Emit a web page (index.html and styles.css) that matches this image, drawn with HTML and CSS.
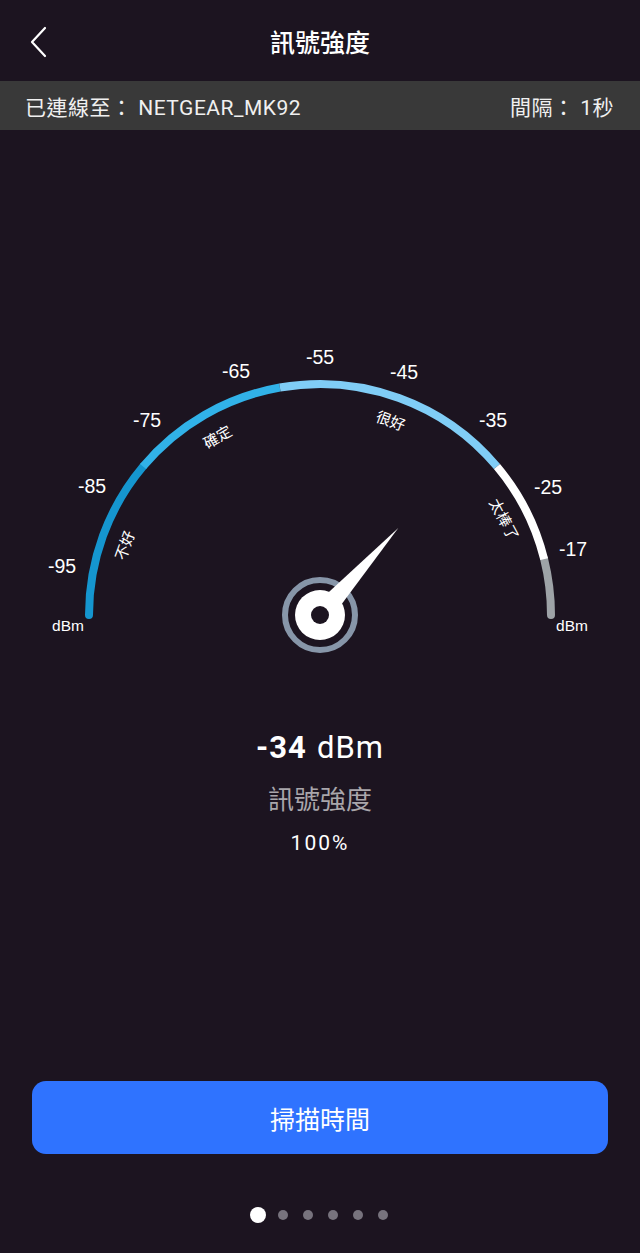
FILE: index.html
```html
<!DOCTYPE html>
<html lang="zh-Hant">
<head>
    <meta charset="UTF-8">
    <meta name="viewport" content="width=device-width, initial-scale=1.0">
    <title>訊號強度</title>
    <link rel="stylesheet" href="styles.css">
</head>
<body>
    <header class="topbar">
        <a href="#" class="back">
            <svg width="20" height="32" viewBox="0 0 20 32">
                <polyline points="15,2 2,16 15,30" fill="none" stroke="#fff" stroke-width="2.2" stroke-linecap="round" stroke-linejoin="round"/>
            </svg>
        </a>
        <h1>訊號強度</h1>
        <span></span>
    </header>

    <div class="status">
        <span>已連線至： NETGEAR_MK92</span>
        <span>間隔： 1秒</span>
    </div>

    <main class="meter">
        <svg class="gauge" width="640" height="340" viewBox="0 330 640 340">
            <!-- arc: center 320,615 r 231 -->
            <g fill="none" stroke-width="8">
                <path d="M89 615 A231 231 0 0 1 143.05 466.51" stroke="#1596cf" stroke-linecap="round"/>
                <path d="M143.05 466.51 A231 231 0 0 1 279.89 387.51" stroke="#31b2e8"/>
                <path d="M279.89 387.51 A231 231 0 0 1 496.95 466.51" stroke="#80cdf6"/>
                <path d="M544.14 559.12 A231 231 0 0 1 551 615" stroke="#9ea3a7" stroke-linecap="round"/>
                <path d="M496.95 466.51 A231 231 0 0 1 544.14 559.12" stroke="#ffffff"/>
            </g>

            <g class="ticks" text-anchor="middle">
                <text x="62" y="573">-95</text>
                <text x="92" y="493">-85</text>
                <text x="147" y="427">-75</text>
                <text x="236" y="378">-65</text>
                <text x="320" y="364">-55</text>
                <text x="404" y="379">-45</text>
                <text x="493" y="427">-35</text>
                <text x="548" y="494">-25</text>
                <text x="573" y="556">-17</text>
            </g>

            <g class="unit" text-anchor="middle">
                <text x="68" y="631">dBm</text>
                <text x="572" y="631">dBm</text>
            </g>

            <g class="zone" text-anchor="middle" dominant-baseline="central">
                <text transform="translate(124 545) rotate(-70)">不好</text>
                <text transform="translate(217 436) rotate(-30)">確定</text>
                <text transform="translate(391 420) rotate(20)">很好</text>
                <text transform="translate(505 519) rotate(62)">太棒了</text>
            </g>

            <circle cx="320" cy="615" r="35" fill="none" stroke="#8796a9" stroke-width="6"/>
            <polygon points="0,-11 117,0 0,11" fill="#fff" transform="translate(320 615) rotate(-48)"/>
            <circle cx="320" cy="615" r="25" fill="#fff"/>
            <circle cx="320" cy="615" r="9" fill="#1c1420"/>
        </svg>

        <div class="readout">
            <div class="value"><b>-34</b><span>dBm</span></div>
            <div class="label">訊號強度</div>
            <div class="percent">100%</div>
        </div>
    </main>

    <footer class="actions">
        <a href="#" class="button">掃描時間</a>
        <div class="dots">
            <span class="dot active"></span>
            <span class="dot"></span>
            <span class="dot"></span>
            <span class="dot"></span>
            <span class="dot"></span>
            <span class="dot"></span>
        </div>
    </footer>
</body>
</html>
```

FILE: styles.css
```css
/* Base */
body {
    margin: 0;
    min-height: 1253px;
    display: flex;
    flex-direction: column;
    background: #1c1420;
    color: #fff;
    font-family: Roboto, "Noto Sans CJK TC", sans-serif;
}

a {
    color: inherit;
    text-decoration: none;
}

/* Top bar */
.topbar {
    height: 81px;
    display: grid;
    grid-template-columns: 80px 1fr 80px;
    align-items: center;
}

.back {
    display: flex;
    padding-left: 30px;
    padding-top: 2px;
}

.topbar h1 {
    margin: 0;
    text-align: center;
    font-size: 25px;
    font-weight: 500;
}

/* Connection strip */
.status {
    height: 49px;
    display: flex;
    align-items: center;
    justify-content: space-between;
    padding: 0 26px 0 25px;
    background: #393939;
    font-size: 21px;
    letter-spacing: 0.5px;
    color: #f0f0f0;
}

/* Gauge */
.meter {
    display: flex;
    flex-direction: column;
    align-items: center;
}

.gauge {
    display: block;
    margin-top: 200px;
}

.ticks text {
    font-family: "Liberation Sans", Arial, sans-serif;
    font-size: 19.5px;
    fill: #fff;
}

.unit text {
    font-family: "Liberation Sans", Arial, sans-serif;
    font-size: 15.5px;
    fill: #fff;
}

.zone text {
    font-family: "Noto Sans CJK TC", sans-serif;
    font-size: 15px;
    fill: #fff;
}

/* Readout */
.readout {
    margin-top: 60px;
    text-align: center;
}

.value {
    display: flex;
    justify-content: center;
    gap: 10px;
    font-size: 31px;
    line-height: 36px;
    letter-spacing: 1px;
}

.value b {
    font-weight: 700;
}

.label {
    margin-top: 18px;
    font-size: 26px;
    line-height: 32px;
    color: #a9a6ab;
}

.percent {
    margin-top: 14px;
    font-size: 21px;
    line-height: 26px;
    letter-spacing: 2px;
}

/* Bottom actions */
.actions {
    margin-top: auto;
    padding: 0 32px 30px;
}

.button {
    height: 73px;
    display: flex;
    align-items: center;
    justify-content: center;
    border-radius: 14px;
    background: #2f73ff;
    font-size: 25px;
}

.dots {
    margin-top: 53px;
    display: flex;
    justify-content: center;
}

.dot {
    width: 25px;
    height: 16px;
    display: flex;
    align-items: center;
    justify-content: center;
}

.dot::before {
    content: "";
    width: 10px;
    height: 10px;
    border-radius: 50%;
    background: #77737d;
}

.dot.active::before {
    width: 16px;
    height: 16px;
    background: #fff;
}
```
